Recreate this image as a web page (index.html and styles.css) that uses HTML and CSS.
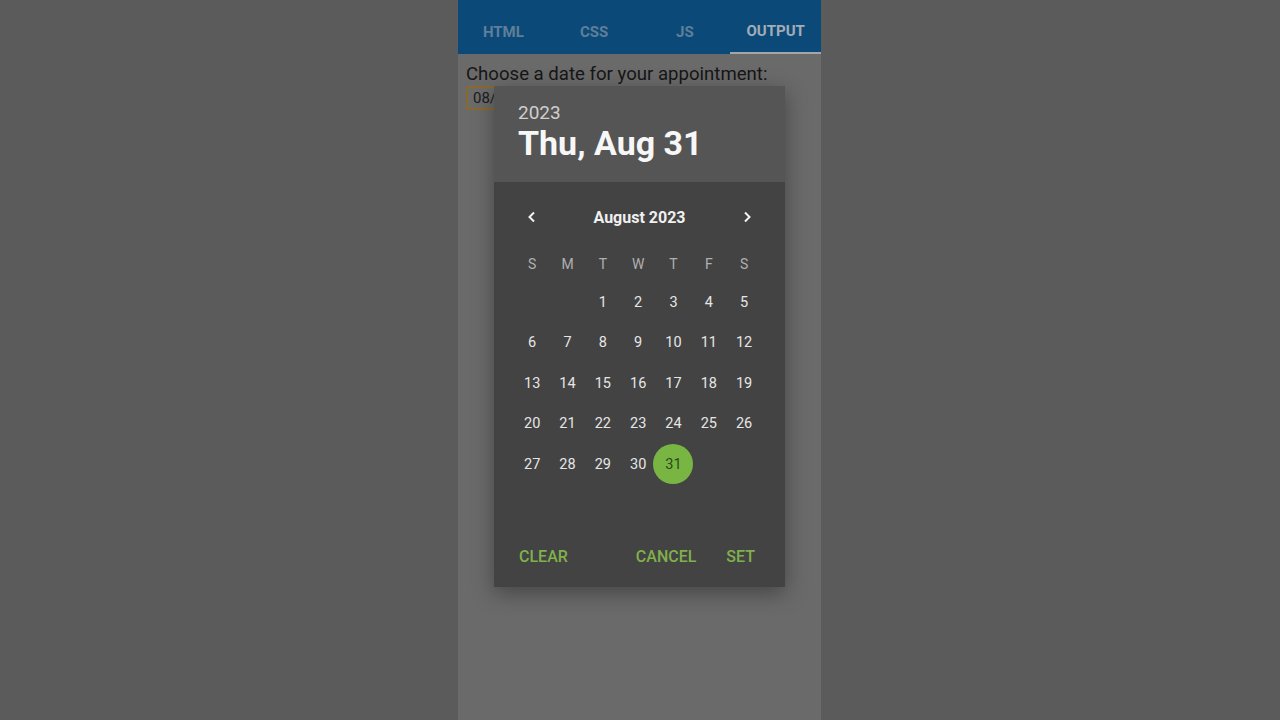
FILE: index.html
```html
<!DOCTYPE html>
<html>
<head>
<meta charset="utf-8">
<link rel="stylesheet" href="styles.css">
</head>
<body>
<div class="phone">
  <div class="topbar">
    <div class="tab">HTML</div>
    <div class="tab">CSS</div>
    <div class="tab">JS</div>
    <div class="tab active">OUTPUT</div>
  </div>
  <div class="content">
    <label class="label">Choose a date for your appointment:</label>
    <div class="input"><span>08/</span></div>
  </div>
  <div class="dialog">
    <div class="dheader">
      <div class="year">2023</div>
      <div class="date">Thu, Aug 31</div>
    </div>
    <div class="dbody">
      <div class="nav">
        <svg class="arrow" width="14" height="14" viewBox="0 0 14 14"><path d="M9 2.5 L4.5 7 L9 11.5" fill="none" stroke="#f2f2f2" stroke-width="2"/></svg>
        <div class="month">August 2023</div>
        <svg class="arrow" width="14" height="14" viewBox="0 0 14 14"><path d="M5 2.5 L9.5 7 L5 11.5" fill="none" stroke="#f2f2f2" stroke-width="2"/></svg>
      </div>
      <div class="grid weekdays">
        <div>S</div><div>M</div><div>T</div><div>W</div><div>T</div><div>F</div><div>S</div>
      </div>
      <div class="grid days">
        <div></div><div></div><div>1</div><div>2</div><div>3</div><div>4</div><div>5</div>
        <div>6</div><div>7</div><div>8</div><div>9</div><div>10</div><div>11</div><div>12</div>
        <div>13</div><div>14</div><div>15</div><div>16</div><div>17</div><div>18</div><div>19</div>
        <div>20</div><div>21</div><div>22</div><div>23</div><div>24</div><div>25</div><div>26</div>
        <div>27</div><div>28</div><div>29</div><div>30</div><div class="sel"><span>31</span></div><div></div><div></div>
      </div>
      <div class="actions">
        <div class="btn">CLEAR</div>
        <div class="spacer"></div>
        <div class="btn">CANCEL</div>
        <div class="btn">SET</div>
      </div>
    </div>
  </div>
</div>
</body>
</html>
```
FILE: styles.css
```css
html, body {
  margin: 0;
  padding: 0;
  background: #5b5b5b;
  font-family: Roboto, "Liberation Sans", sans-serif;
}
body {
  height: 720px;
  overflow: hidden;
}
.phone {
  position: relative;
  width: 363px;
  height: 720px;
  margin-left: 458px;
  background: #6a6a6a;
}
.topbar {
  height: 54px;
  background: #0b4a78;
  display: grid;
  grid-template-columns: repeat(4, 1fr);
}
.tab {
  display: flex;
  align-items: center;
  justify-content: center;
  padding-top: 9px;
  font-size: 15px;
  font-weight: 700;
  color: #5f7f98;
  box-sizing: border-box;
}
.tab.active {
  color: #a3adb6;
  border-bottom: 2px solid #a0a6ab;
}
.content {
  padding: 9px 8px;
}
.label {
  display: block;
  font-size: 18.6px;
  color: #161616;
  line-height: 22px;
}
.input {
  display: inline-block;
  width: 40px;
  overflow: hidden;
  margin-top: 1px;
  border: 2px solid #8a6a2a;
  border-radius: 3px;
  padding: 1px 5px;
  font-size: 15px;
  color: #1a1a1a;
  background: #6b6b6b;
}
.dialog {
  position: absolute;
  left: 36px;
  top: 86px;
  width: 291px;
  height: 501px;
  box-shadow: 0 6px 20px rgba(0,0,0,0.35);
  display: flex;
  flex-direction: column;
}
.dheader {
  height: 96px;
  background: #555555;
  padding: 16px 24px 0;
  box-sizing: border-box;
}
.year {
  font-size: 19px;
  color: #cfcfcf;
  line-height: 22px;
}
.date {
  font-size: 34px;
  font-weight: 700;
  color: #f7f7f7;
  line-height: 40px;
  margin-top: -1px;
}
.dbody {
  flex: 1;
  background: #434343;
  display: flex;
  flex-direction: column;
}
.nav {
  display: flex;
  align-items: center;
  justify-content: space-between;
  padding: 0 31px 0 31px;
  height: 24px;
  margin-top: 23px;
}
.month {
  font-size: 16px;
  font-weight: 700;
  color: #f0f0f0;
}
.grid {
  display: grid;
  grid-template-columns: repeat(7, 35.33px);
  margin-left: 20.5px;
}
.grid > div {
  display: flex;
  align-items: center;
  justify-content: center;
}
.weekdays {
  margin-top: 25px;
  height: 20px;
  font-size: 14px;
  color: #b0b0b0;
}
.days {
  margin-top: 18px;
  grid-auto-rows: 40.5px;
  font-size: 14.5px;
  color: #e6e6e6;
}
.days > div {
  height: 20px;
}
.days .sel span {
  width: 40px;
  height: 40px;
  border-radius: 50%;
  background: #79b542;
  color: #2a4a18;
  display: flex;
  align-items: center;
  justify-content: center;
  flex: none;
}
.actions {
  display: flex;
  align-items: center;
  padding: 0 30px 0 25px;
  margin-top: auto;
  margin-bottom: 21px;
  gap: 30px;
}
.spacer {
  flex: 1;
}
.btn {
  font-size: 16px;
  font-weight: 500;
  color: #80b04c;
}
```
